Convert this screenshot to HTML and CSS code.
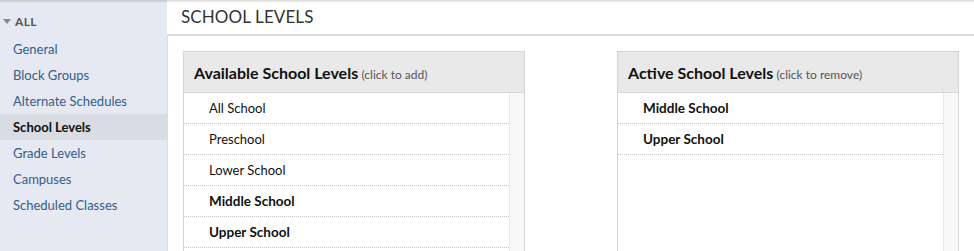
FILE: index.html
```html
<!DOCTYPE html>
<html lang="en">
<head>
    <meta charset="UTF-8">
    <title>School Levels</title>
    <link rel="stylesheet" href="styles.css">
</head>
<body>
    <div class="page">
        <aside class="sidebar">
            <div class="nav-group"><span class="caret"></span>ALL</div>
            <a class="nav-item" href="#">General</a>
            <a class="nav-item" href="#">Block Groups</a>
            <a class="nav-item" href="#">Alternate Schedules</a>
            <a class="nav-item active" href="#">School Levels</a>
            <a class="nav-item" href="#">Grade Levels</a>
            <a class="nav-item" href="#">Campuses</a>
            <a class="nav-item" href="#">Scheduled Classes</a>
        </aside>

        <main class="main">
            <h1 class="page-title">SCHOOL LEVELS</h1>
            <div class="content">
                <section class="panel">
                    <div class="panel-head">
                        <strong>Available School Levels</strong> <small>(click to add)</small>
                    </div>
                    <div class="panel-body">
                        <ul class="level-list">
                            <li>All School</li>
                            <li>Preschool</li>
                            <li>Lower School</li>
                            <li class="selected">Middle School</li>
                            <li class="selected">Upper School</li>
                        </ul>
                        <div class="scroll-track"></div>
                    </div>
                </section>

                <section class="panel">
                    <div class="panel-head">
                        <strong>Active School Levels</strong> <small>(click to remove)</small>
                    </div>
                    <div class="panel-body">
                        <ul class="level-list">
                            <li class="selected">Middle School</li>
                            <li class="selected">Upper School</li>
                        </ul>
                        <div class="scroll-track"></div>
                    </div>
                </section>
            </div>
        </main>
    </div>
</body>
</html>
```

FILE: styles.css
```css
* {
    box-sizing: border-box;
    margin: 0;
    padding: 0;
}

html, body {
    height: 100%;
    overflow: hidden;
}

body {
    font-family: "Lato", "Liberation Sans", sans-serif;
    font-size: 13px;
    color: #111;
    background: #fff;
}

/* thin shadow along the top edge */
body::before {
    content: "";
    position: fixed;
    top: 0;
    left: 0;
    right: 0;
    height: 3px;
    background: linear-gradient(rgba(0,0,0,0.16), rgba(0,0,0,0));
    z-index: 5;
}

.page {
    display: flex;
    height: 100%;
}

.sidebar {
    width: 167px;
    flex-shrink: 0;
    background: #e6e9f1;
    padding-top: 8px;
}

.nav-group {
    display: flex;
    align-items: center;
    height: 28px;
    padding: 0 0 2px 3px;
    font-weight: 700;
    font-size: 12px;
    color: #555;
    letter-spacing: 0.3px;
}

.caret {
    width: 0;
    height: 0;
    border-left: 4px solid transparent;
    border-right: 4px solid transparent;
    border-top: 5px solid #888;
    margin-right: 4px;
}

.nav-item {
    display: block;
    height: 26px;
    line-height: 26px;
    padding-left: 13px;
    color: #335d8a;
    text-decoration: none;
}

.nav-item.active {
    background: #d9dce3;
    color: #111;
    font-weight: 700;
}

.main {
    flex: 1;
    display: flex;
    flex-direction: column;
}

.page-title {
    height: 34px;
    padding: 6px 0 0 14px;
    font-size: 17px;
    font-weight: 400;
    color: #333;
    letter-spacing: 0.1px;
}

.content {
    flex: 1;
    display: flex;
    justify-content: space-between;
    padding: 15px 15px 0;
    border-top: 2px solid #dcdcdc;
    border-left: 1px solid #dcdcdc;
}

.panel {
    width: 342px;
    display: flex;
    flex-direction: column;
    border: 1px solid #d6d6d6;
    border-bottom: 0;
}

.panel-head {
    height: 41px;
    line-height: 42px;
    padding-left: 10px;
    background: #e9e9e9;
    border-bottom: 1px solid #d6d6d6;
}

.panel-head strong {
    font-size: 16px;
    font-weight: 700;
    color: #111;
}

.panel-head small {
    font-size: 12px;
    color: #555;
}

.panel-body {
    flex: 1;
    display: flex;
}

.level-list {
    flex: 1;
    list-style: none;
}

.level-list li {
    height: 31px;
    line-height: 30px;
    padding-left: 25px;
    border-bottom: 1px dotted #c8c8c8;
}

.level-list li.selected {
    font-weight: 700;
    font-size: 13.5px;
}

.scroll-track {
    width: 15px;
    background: #f8f8f8;
    border-left: 1px solid #e8e8e8;
}
```
